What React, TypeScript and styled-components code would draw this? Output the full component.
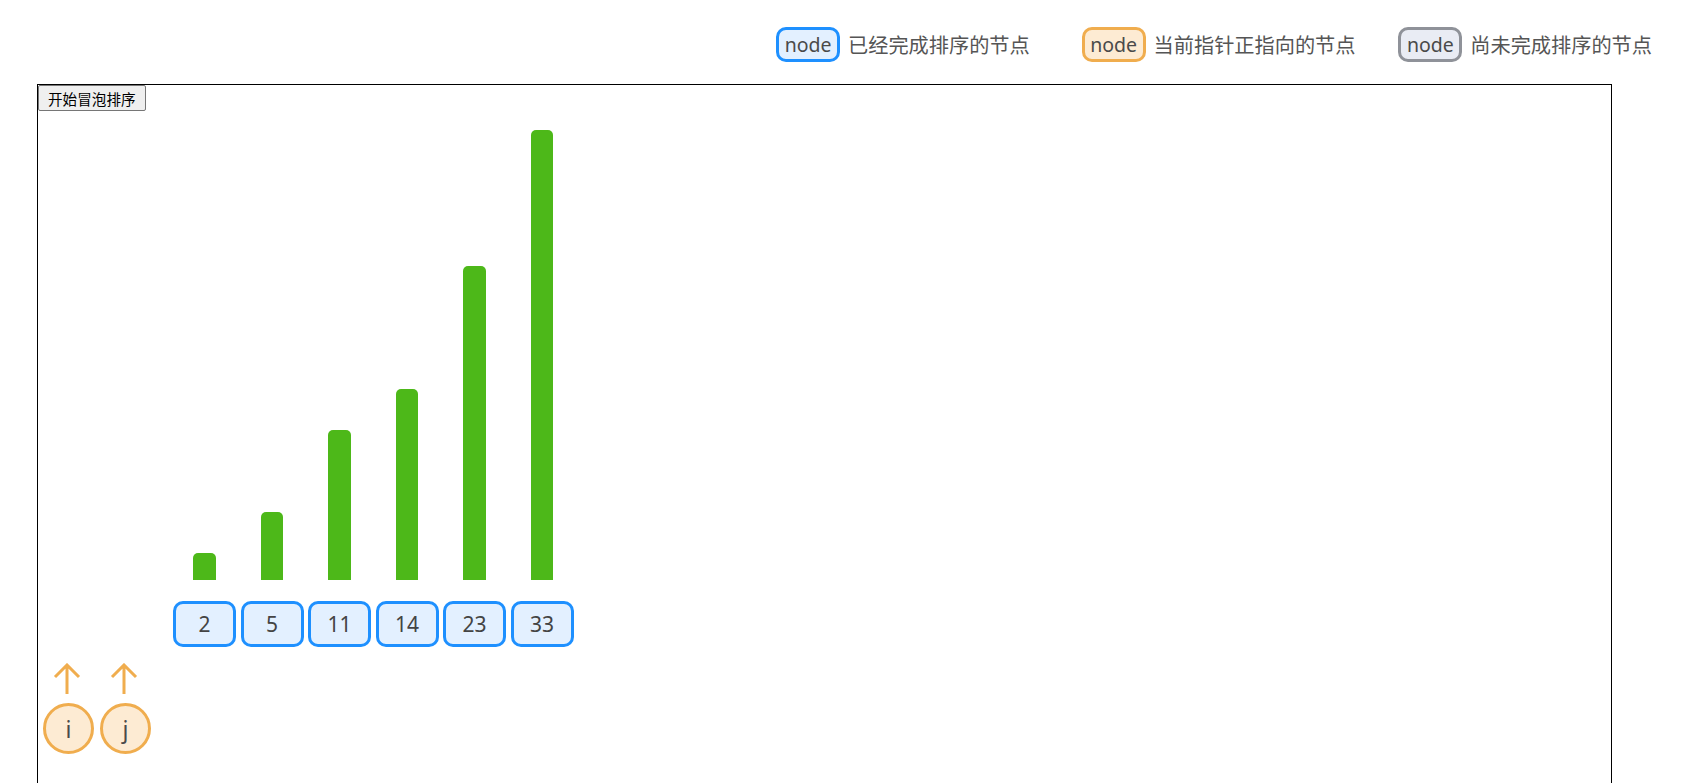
import styled, { createGlobalStyle } from 'styled-components';

const GlobalStyle = createGlobalStyle`
  body {
    margin: 0;
    background: #fff;
    font-family: "Noto Sans", "Noto Sans CJK SC", sans-serif;
  }
`;

type Tone = 'done' | 'active' | 'pending';

const tones: Record<Tone, { border: string; bg: string }> = {
  done: { border: '#1e90ff', bg: '#e3f0ff' },
  active: { border: '#f0ad4e', bg: '#fdebd3' },
  pending: { border: '#8f9299', bg: '#e9ecf4' },
};

const Page = styled.div`
  width: 1698px;
  height: 783px;
  overflow: hidden;
`;

const Legend = styled.div`
  display: flex;
  justify-content: flex-end;
  align-items: center;
  height: 35px;
  padding: 27px 46px 0 0;
`;

const LegendItem = styled.div<{ $offset: number }>`
  display: flex;
  align-items: center;
  gap: 8px;
  margin-left: ${(p) => p.$offset}px;
`;

const Badge = styled.span<{ $tone: Tone }>`
  box-sizing: border-box;
  height: 35px;
  padding: 0 5.5px;
  display: flex;
  align-items: center;
  border: 3px solid ${(p) => tones[p.$tone].border};
  background: ${(p) => tones[p.$tone].bg};
  border-radius: 10px;
  font-size: 19.5px;
  color: #4a4a4a;
`;

const LegendLabel = styled.span`
  font-size: 20.2px;
  color: #555;
`;

const Stage = styled.div`
  box-sizing: border-box;
  width: 1575px;
  height: 720px;
  margin: 22px 0 0 37px;
  border: 1.5px solid #000;
`;

const StartButton = styled.button`
  display: block;
  height: 26px;
  margin: 0;
  padding: 0 9px;
  font-family: "Noto Sans CJK SC", sans-serif;
  font-size: 14.6px;
  color: #000;
  background: #efefef;
  border: 1px solid #767676;
  border-radius: 2px;
`;

const Bars = styled.div`
  display: flex;
  gap: 4.5px;
  align-items: flex-end;
  height: 450px;
  margin: 19px 0 0 135px;
`;

const BarSlot = styled.div`
  width: 63px;
  display: flex;
  justify-content: center;
`;

const Bar = styled.div`
  width: 22.5px;
  background: #4db819;
  border-radius: 5px 5px 0 0;
`;

const Nodes = styled.div`
  display: flex;
  gap: 4.5px;
  margin: 21px 0 0 135px;
`;

const NodeBox = styled.div<{ $tone: Tone }>`
  box-sizing: border-box;
  width: 63px;
  height: 46px;
  display: flex;
  align-items: center;
  justify-content: center;
  border: 3px solid ${(p) => tones[p.$tone].border};
  background: ${(p) => tones[p.$tone].bg};
  border-radius: 10px;
  font-size: 21px;
  color: #444;
`;

const Pointers = styled.div`
  display: flex;
  gap: 6px;
  margin: 16px 0 0 5px;
`;

const Pointer = styled.div`
  display: flex;
  flex-direction: column;
  align-items: center;
  gap: 9px;
`;

const PointerArrow = styled.svg`
  display: block;
  margin-right: 3px;
`;

const PointerCircle = styled.div`
  box-sizing: border-box;
  width: 51px;
  height: 51px;
  border-radius: 50%;
  border: 3px solid #f0ad4e;
  background: #fdebd3;
  display: flex;
  align-items: center;
  justify-content: center;
  font-size: 23px;
  color: #4a4a4a;
`;

const values = [2, 5, 11, 14, 23, 33];
const unit = 13.64;

const legend: { tone: Tone; label: string; offset: number }[] = [
  { tone: 'done', label: '已经完成排序的节点', offset: 0 },
  { tone: 'active', label: '当前指针正指向的节点', offset: 52 },
  { tone: 'pending', label: '尚未完成排序的节点', offset: 43 },
];

function Arrow() {
  return (
    <PointerArrow width="28" height="31" viewBox="0 0 28 31">
      <path
        d="M14 31 V2 M2 14 L14 2 L26 14"
        fill="none"
        stroke="#f0ad4e"
        strokeWidth="3"
      />
    </PointerArrow>
  );
}

export default function App() {
  return (
    <Page>
      <GlobalStyle />
      <Legend>
        {legend.map((item) => (
          <LegendItem key={item.tone} $offset={item.offset}>
            <Badge $tone={item.tone}>node</Badge>
            <LegendLabel>{item.label}</LegendLabel>
          </LegendItem>
        ))}
      </Legend>
      <Stage>
        <StartButton>开始冒泡排序</StartButton>
        <Bars>
          {values.map((v) => (
            <BarSlot key={v}>
              <Bar style={{ height: v * unit }} />
            </BarSlot>
          ))}
        </Bars>
        <Nodes>
          {values.map((v) => (
            <NodeBox key={v} $tone="done">
              {v}
            </NodeBox>
          ))}
        </Nodes>
        <Pointers>
          {['i', 'j'].map((name) => (
            <Pointer key={name}>
              <Arrow />
              <PointerCircle>{name}</PointerCircle>
            </Pointer>
          ))}
        </Pointers>
      </Stage>
    </Page>
  );
}
